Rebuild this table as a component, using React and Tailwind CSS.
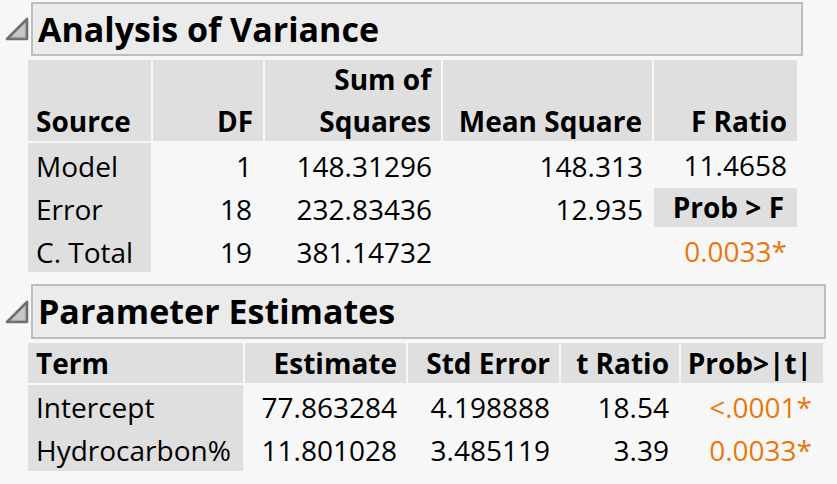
import React from 'react';

const font = { fontFamily: '"Open Sans", "Noto Sans", sans-serif' };

function Disclosure() {
  return (
    <svg width="24" height="24" viewBox="0 0 24 24" className="shrink-0">
      <polygon points="22,2 22,22 2,22" fill="#b9b9b9" stroke="#707070" strokeWidth="2.6" strokeLinejoin="round" />
      <polygon points="19.5,7 19.5,19.5 7,19.5" fill="#c8c8c8" />
    </svg>
  );
}

function Title({ children, wide }) {
  return (
    <div className="flex items-center pl-[5px]">
      <Disclosure />
      <div className={`ml-[2px] border-2 border-[#bdbdbd] bg-[#ebebeb] pl-[5px] font-bold text-black text-[34px] leading-[50px] ${wide ? 'w-[795px] h-[55px]' : 'w-[772px] h-[54px]'}`}>
        {children}
      </div>
    </div>
  );
}

const aovRows = [
  ['Model', '1', '148.31296', '148.313', '11.4658'],
  ['Error', '18', '232.83436', '12.935', null],
  ['C. Total', '19', '381.14732', '', ''],
];

const paramRows = [
  ['Intercept', '77.863284', '4.198888', '18.54', '<.0001*'],
  ['Hydrocarbon%', '11.801028', '3.485119', '3.39', '0.0033*'],
];

export default function App() {
  return (
    <div className="w-[837px] h-[484px] overflow-hidden bg-[#f7f7f7] text-black pt-[2px]" style={font}>
      <Title>Analysis of Variance</Title>

      <div className="ml-[28px] mt-[4px]">
        <div className="flex gap-[2px] h-[81px] items-stretch font-bold text-[28px] leading-[40px]">
          <div className="w-[123px] bg-[#dfdfdf] flex items-end pl-[8px]">Source</div>
          <div className="w-[110px] bg-[#dfdfdf] flex items-end justify-end pr-[10px]">DF</div>
          <div className="w-[176px] bg-[#dfdfdf] flex flex-col justify-end items-end pr-[10px] leading-[43px]">
            <span>Sum of</span>
            <span className="leading-[40px]">Squares</span>
          </div>
          <div className="w-[209px] bg-[#dfdfdf] flex items-end justify-end pr-[10px]">Mean Square</div>
          <div className="w-[143px] bg-[#dfdfdf] flex items-end justify-end pr-[10px]">F Ratio</div>
        </div>

        <div className="mt-[2px] text-[28px] leading-[43px]">
          {aovRows.map((r) => (
            <div key={r[0]} className="flex gap-[2px] h-[43px]">
              <div className="w-[123px] bg-[#dfdfdf] pl-[8px] pt-[2px]">{r[0]}</div>
              <div className="w-[110px] text-right pr-[11px] pt-[2px]">{r[1]}</div>
              <div className="w-[176px] text-right pr-[9px] pt-[2px]">{r[2]}</div>
              <div className="w-[209px] text-right pr-[9px] pt-[2px]">{r[3]}</div>
              <div className="w-[143px] flex items-center">
                {r[4] === null ? (
                  <div className="w-[146px] h-[39px] bg-[#dfdfdf] font-bold text-right pr-[13px] leading-[39px]">Prob &gt; F</div>
                ) : r[4] === '' ? (
                  <div className="w-full text-right pr-[10px] pt-[2px] text-[#e8780c]">0.0033*</div>
                ) : (
                  <div className="w-full text-right pr-[10px] pt-[2px]">{r[4]}</div>
                )}
              </div>
            </div>
          ))}
        </div>
      </div>

      <div className="mt-[12px]">
        <Title wide>Parameter Estimates</Title>
      </div>

      <div className="ml-[28px] mt-[4px]">
        <div className="flex gap-[2px] h-[40px] font-bold text-[28px] leading-[40px]">
          <div className="w-[215px] bg-[#dfdfdf] pl-[8px]">Term</div>
          <div className="w-[161px] bg-[#dfdfdf] text-right pr-[9px]">Estimate</div>
          <div className="w-[151px] bg-[#dfdfdf] text-right pr-[9px]">Std Error</div>
          <div className="w-[118px] bg-[#dfdfdf] text-right pr-[10px]">t Ratio</div>
          <div className="w-[142px] bg-[#dfdfdf] text-right pr-[11px]">Prob&gt;|t|</div>
        </div>
        <div className="mt-[2px] text-[28px] leading-[43px]">
          {paramRows.map((r) => (
            <div key={r[0]} className="flex gap-[2px] h-[43px]">
              <div className="w-[215px] bg-[#dfdfdf] pl-[8px] pt-[1px]">{r[0]}</div>
              <div className="w-[161px] text-right pr-[9px] pt-[1px]">{r[1]}</div>
              <div className="w-[151px] text-right pr-[9px] pt-[1px]">{r[2]}</div>
              <div className="w-[118px] text-right pr-[10px] pt-[1px]">{r[3]}</div>
              <div className="w-[142px] text-right pr-[11px] pt-[1px] text-[#e8780c]">{r[4]}</div>
            </div>
          ))}
        </div>
      </div>
    </div>
  );
}
